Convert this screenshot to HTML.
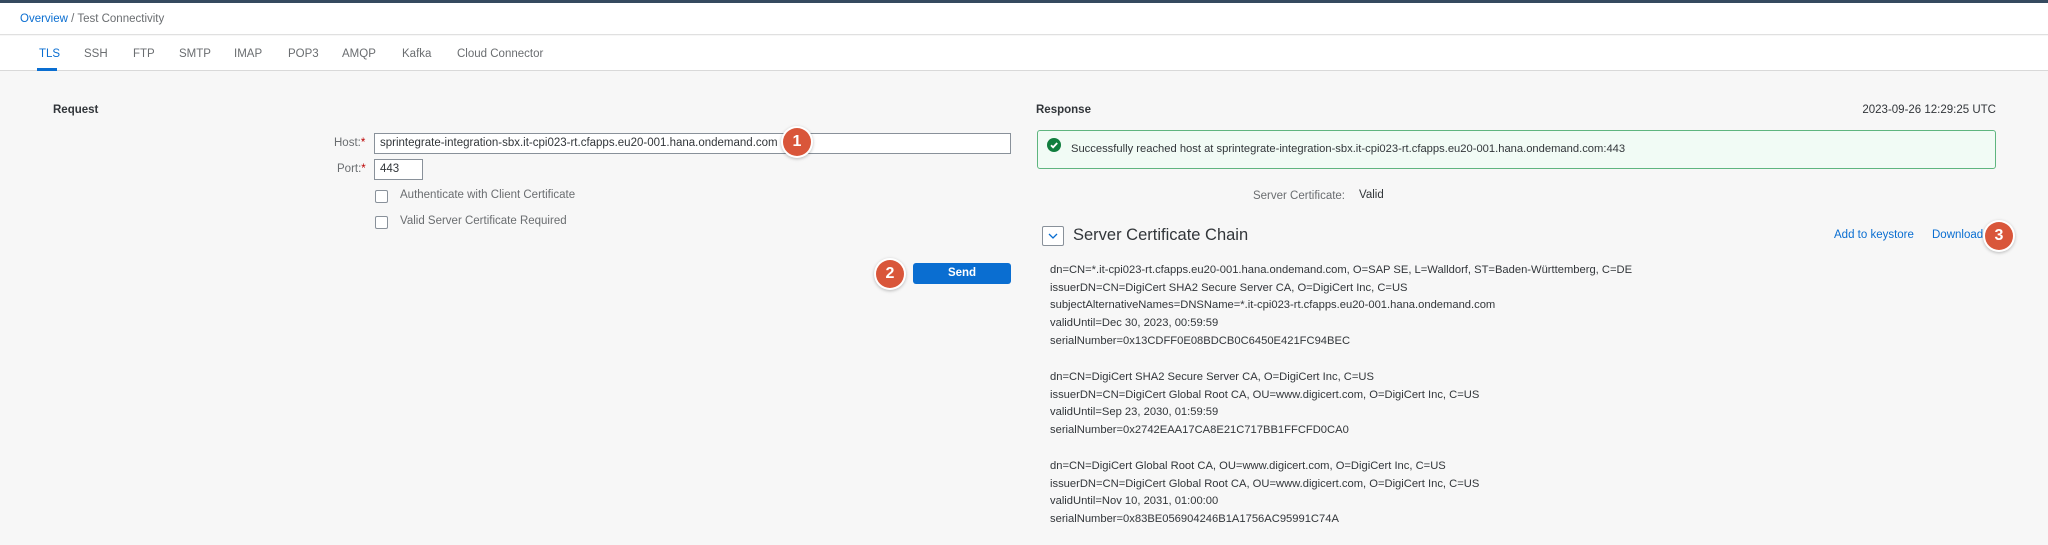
<!DOCTYPE html>
<html><head><meta charset="utf-8"><style>
*{margin:0;padding:0;box-sizing:border-box}
body{width:2048px;height:545px;background:#f7f7f7;font-family:"Liberation Sans",sans-serif;color:#32363a;position:relative;overflow:hidden;font-size:11.5px}
.a{position:absolute;white-space:nowrap}
.top{left:0;top:0;width:2048px;height:3px;background:#354a5f}
.hdr{left:0;top:3px;width:2048px;height:32px;background:#fff;border-bottom:1px solid #e0e0e0}
.tabs{left:0;top:36px;width:2048px;height:35px;background:#fff;border-bottom:1px solid #d9d9d9}
.tab{top:48px;font-size:11.5px;color:#6a6d70}
.lbl{color:#6a6d70;font-size:11.5px}
.in{background:#fff;border:1px solid #89919a;height:21px;font-size:11.5px;padding:3px 5px;color:#32363a}
.cb{width:13px;height:13px;border:1px solid #89919a;background:#fff;border-radius:2px}
.badge{width:28px;height:28px;border-radius:50%;background:#d9563a;color:#fff;font-weight:bold;font-size:16px;text-align:center;line-height:28px;box-shadow:0 0 0 2px #fff,0 1px 3px 2px rgba(0,0,0,.25)}
.cert{left:1050px;font-size:11.2px;line-height:17.7px;color:#32363a}
.link{color:#0a6ed1;font-size:11.5px}
</style></head><body>
<div class="a top"></div>
<div class="a hdr"></div>
<div class="a" style="left:20px;top:13px;font-size:11.5px"><span style="color:#0a6ed1">Overview</span> <span style="color:#6a6d70">/ Test Connectivity</span></div>
<div class="a tabs"></div>
<div class="a tab" style="left:39px;color:#0a6ed1">TLS</div>
<div class="a" style="left:37px;top:68px;width:20px;height:3px;background:#0a6ed1"></div>
<div class="a tab" style="left:84px">SSH</div>
<div class="a tab" style="left:133px">FTP</div>
<div class="a tab" style="left:179px">SMTP</div>
<div class="a tab" style="left:234px">IMAP</div>
<div class="a tab" style="left:288px">POP3</div>
<div class="a tab" style="left:342px">AMQP</div>
<div class="a tab" style="left:402px">Kafka</div>
<div class="a tab" style="left:457px">Cloud Connector</div>

<div class="a" style="left:53px;top:104px;font-weight:bold;font-size:11.5px">Request</div>
<div class="a lbl" style="left:334px;top:137px">Host:<span style="color:#bb0000">*</span></div>
<div class="a in" style="left:374px;top:133px;width:637px">sprintegrate-integration-sbx.it-cpi023-rt.cfapps.eu20-001.hana.ondemand.com</div>
<div class="a lbl" style="left:337px;top:163px">Port:<span style="color:#bb0000">*</span></div>
<div class="a in" style="left:374px;top:159px;width:49px">443</div>
<div class="a cb" style="left:375px;top:190px"></div>
<div class="a lbl" style="left:400px;top:189px">Authenticate with Client Certificate</div>
<div class="a cb" style="left:375px;top:216px"></div>
<div class="a lbl" style="left:400px;top:215px">Valid Server Certificate Required</div>
<div class="a" style="left:913px;top:263px;width:98px;height:21px;background:#0a6ed1;border-radius:3px;color:#fff;font-weight:bold;font-size:11.5px;text-align:center;line-height:21px">Send</div>
<div class="a badge" style="left:783px;top:128px">1</div>
<div class="a badge" style="left:876px;top:260px">2</div>

<div class="a" style="left:1036px;top:104px;font-weight:bold;font-size:11.5px">Response</div>
<div class="a" style="right:52px;top:104px;font-size:11.5px">2023-09-26 12:29:25 UTC</div>
<div class="a" style="left:1037px;top:130px;width:959px;height:39px;background:#f1fbf5;border:1px solid #5fb57f;border-radius:3px"></div>
<div class="a" style="left:1047px;top:138px;width:14px;height:14px;border-radius:50%;background:#107e3e"><svg width="14" height="14" viewBox="0 0 14 14"><path d="M4 7.2l2.1 2.1L10.2 5" stroke="#fff" stroke-width="1.8" fill="none"/></svg></div>
<div class="a" style="left:1071px;top:143px;font-size:11.2px">Successfully reached host at sprintegrate-integration-sbx.it-cpi023-rt.cfapps.eu20-001.hana.ondemand.com:443</div>
<div class="a lbl" style="left:1250px;top:190px;width:95px;text-align:right">Server Certificate:</div>
<div class="a" style="left:1359px;top:189px;font-size:11.5px">Valid</div>
<div class="a" style="left:1042px;top:226px;width:22px;height:20px;border:1px solid #89919a;background:#fff;border-radius:2px"><svg width="20" height="18" viewBox="0 0 20 18"><path d="M6 7l4 4 4-4" stroke="#0a6ed1" stroke-width="1.3" fill="none"/></svg></div>
<div class="a" style="left:1073px;top:226px;font-size:16.5px;color:#32363a">Server Certificate Chain</div>
<div class="a link" style="left:1834px;top:229px">Add to keystore</div>
<div class="a link" style="left:1932px;top:229px">Download</div>
<div class="a badge" style="left:1985px;top:222px">3</div>

<div class="a cert" style="top:262px">dn=CN=*.it-cpi023-rt.cfapps.eu20-001.hana.ondemand.com, O=SAP SE, L=Walldorf, ST=Baden-Württemberg, C=DE<br>issuerDN=CN=DigiCert SHA2 Secure Server CA, O=DigiCert Inc, C=US<br>subjectAlternativeNames=DNSName=*.it-cpi023-rt.cfapps.eu20-001.hana.ondemand.com<br>validUntil=Dec 30, 2023, 00:59:59<br>serialNumber=0x13CDFF0E08BDCB0C6450E421FC94BEC</div>
<div class="a cert" style="top:369px">dn=CN=DigiCert SHA2 Secure Server CA, O=DigiCert Inc, C=US<br>issuerDN=CN=DigiCert Global Root CA, OU=www.digicert.com, O=DigiCert Inc, C=US<br>validUntil=Sep 23, 2030, 01:59:59<br>serialNumber=0x2742EAA17CA8E21C717BB1FFCFD0CA0</div>
<div class="a cert" style="top:458px">dn=CN=DigiCert Global Root CA, OU=www.digicert.com, O=DigiCert Inc, C=US<br>issuerDN=CN=DigiCert Global Root CA, OU=www.digicert.com, O=DigiCert Inc, C=US<br>validUntil=Nov 10, 2031, 01:00:00<br>serialNumber=0x83BE056904246B1A1756AC95991C74A</div>
</body></html>
